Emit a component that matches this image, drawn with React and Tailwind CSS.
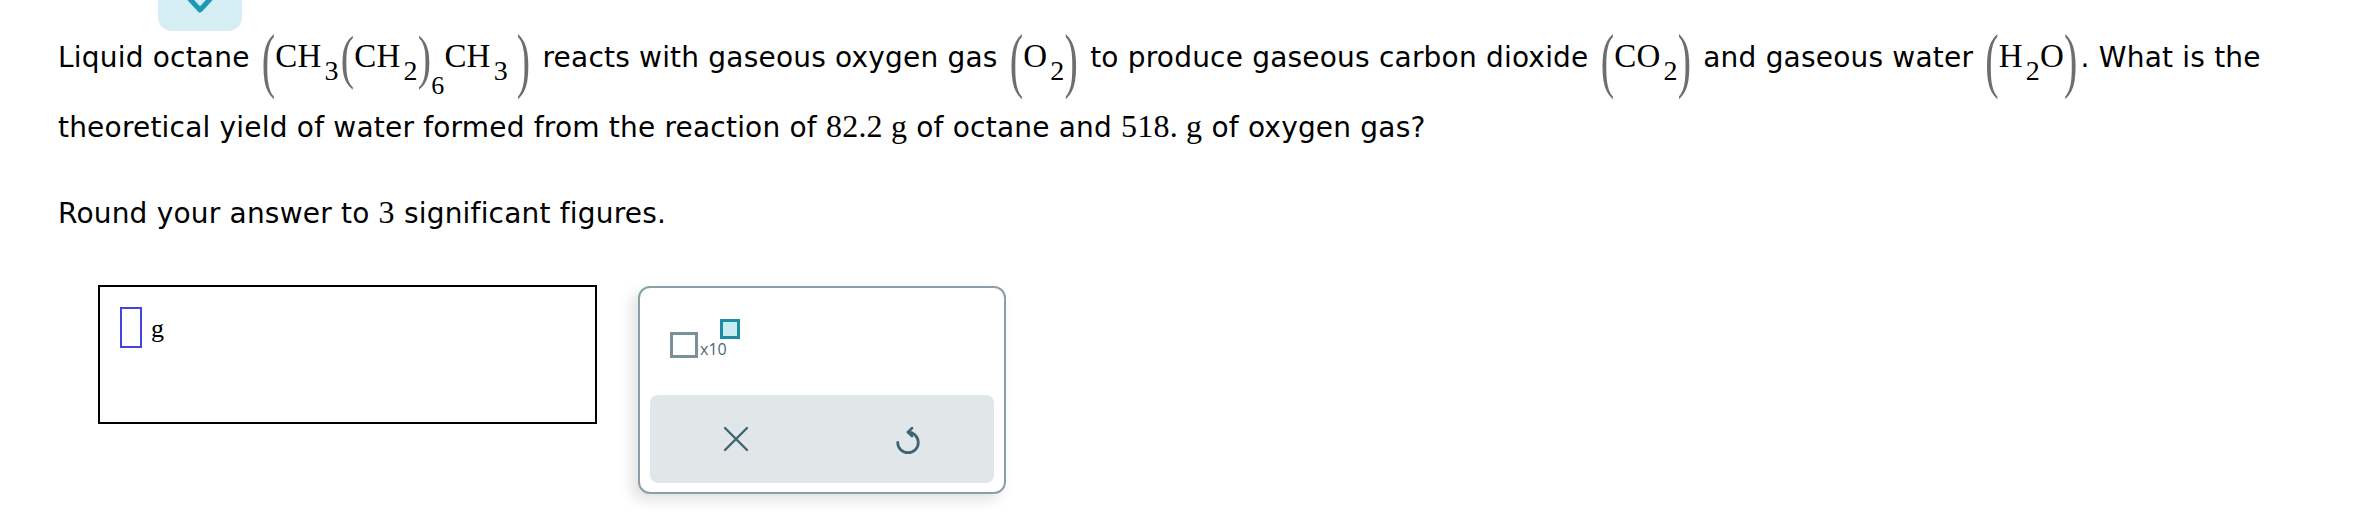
import React from "react";

// stretched grey delimiter, like the math renderer draws it
const Paren = ({ children, tall }) => (
  <span
    className={
      tall
        ? "inline-block leading-none text-[40px] text-[#6e6e6e] translate-y-[7px] scale-y-[1.8]"
        : "inline-block leading-none text-[40px] text-[#6e6e6e] translate-y-[3px] scale-y-[1.5]"
    }
  >
    {children}
  </span>
);

const Sub = ({ children }) => (
  <span className="inline-block leading-none text-[28px] align-[-13px] ml-[3px]">{children}</span>
);

const Formula = ({ children }) => (
  <span className="font-['Liberation_Serif',serif] text-[33px] leading-none mx-[3px]">{children}</span>
);

const Num = ({ children }) => (
  <span className="font-['Liberation_Serif',serif] text-[32px] leading-none">{children}</span>
);

const App = () => {
  return (
    <div className="relative min-h-[520px] bg-white text-black font-['DejaVu_Sans',Verdana,sans-serif] text-[28px] tracking-[0.2px]">
      {/* collapse tab at the top */}
      <div className="absolute left-[158px] top-0 w-[84px] h-[31px] bg-[#d4eef4] rounded-b-[14px] flex justify-center">
        <svg width="40" height="16" viewBox="0 0 40 16">
          <polyline points="7,-4 20,10 33,-4" fill="none" stroke="#1a9bb5" strokeWidth="5" strokeLinecap="round" strokeLinejoin="round" />
        </svg>
      </div>

      <div className="pl-[58px] pt-[23px]">
        <p className="leading-[70px] whitespace-nowrap">
          Liquid octane{" "}
          <Formula>
            <Paren tall>(</Paren>
            CH<Sub>3</Sub>
            <span className="ml-[2px]" />
            <Paren>(</Paren>
            CH<Sub>2</Sub>
            <Paren>)</Paren>
            <span className="inline-block leading-none text-[26px] align-[-13px] translate-y-[14px]">6</span>
            CH<Sub>3</Sub>
            <span className="ml-[9px]" />
            <Paren tall>)</Paren>
          </Formula>{" "}
          reacts with gaseous oxygen gas{" "}
          <Formula>
            <Paren tall>(</Paren>
            O<Sub>2</Sub>
            <Paren tall>)</Paren>
          </Formula>{" "}
          to produce gaseous carbon dioxide{" "}
          <Formula>
            <Paren tall>(</Paren>
            CO<Sub>2</Sub>
            <Paren tall>)</Paren>
          </Formula>{" "}
          and gaseous water{" "}
          <Formula>
            <Paren tall>(</Paren>
            H<Sub>2</Sub>O
            <Paren tall>)</Paren>
          </Formula>
          . What is the
          <br />
          theoretical yield of water formed from the reaction of <Num>82.2 g</Num> of octane and <Num>518. g</Num> of
          oxygen gas?
        </p>

        <p className="mt-[16px] leading-[70px] whitespace-nowrap">
          Round your answer to <Num>3</Num> significant figures.
        </p>

        {/* answer row */}
        <div className="mt-[36px] ml-[40px] flex items-start gap-[41px]">
          <div className="w-[499px] h-[139px] border-2 border-black bg-white">
            <div className="flex items-start gap-[9px] pl-[20px] pt-[20px]">
              <div className="w-[22px] h-[41px] border-2 border-[#4444e4]" />
              <span className="mt-[9px] leading-none font-['Liberation_Serif',serif] text-[26px]">g</span>
            </div>
          </div>

          <div className="mt-[1px] w-[368px] h-[208px] rounded-[12px] border-2 border-[#8b9fa7] bg-white shadow-[-6px_6px_14px_rgba(0,0,0,0.12)] flex flex-col px-[10px] pb-[9px]">
            <div className="flex items-start pl-[20px] pt-[31px]">
              <div className="mt-[13px] w-[28px] h-[26px] border-[3px] border-[#7a9198]" />
              <span className="ml-[2px] mt-[22px] leading-none text-[16px] tracking-normal text-[#4c6770] font-['Open_Sans',sans-serif]">x10</span>
              <div className="-ml-[7px] w-[20px] h-[20px] border-[3px] border-[#1b8ea6] bg-[#c8ecf1]" />
            </div>

            <div className="mt-auto h-[88px] rounded-[8px] bg-[#e1e6e9] grid grid-cols-2 place-items-center">
              <svg width="26" height="26" viewBox="0 0 26 26">
                <path d="M2 2 L24 24 M24 2 L2 24" stroke="#3e6473" strokeWidth="2.4" strokeLinecap="round" />
              </svg>
              <svg width="28" height="32" viewBox="0 0 24 28">
                <path d="M12 8 A9 9 0 1 1 3 17" fill="none" stroke="#3e6473" strokeWidth="2.4" strokeLinecap="round" />
                <path d="M15.5 4.5 L12 8 L15.5 11.5" fill="none" stroke="#3e6473" strokeWidth="2.4" strokeLinecap="round" strokeLinejoin="round" />
              </svg>
            </div>
          </div>
        </div>
      </div>
    </div>
  );
};

export default App;
